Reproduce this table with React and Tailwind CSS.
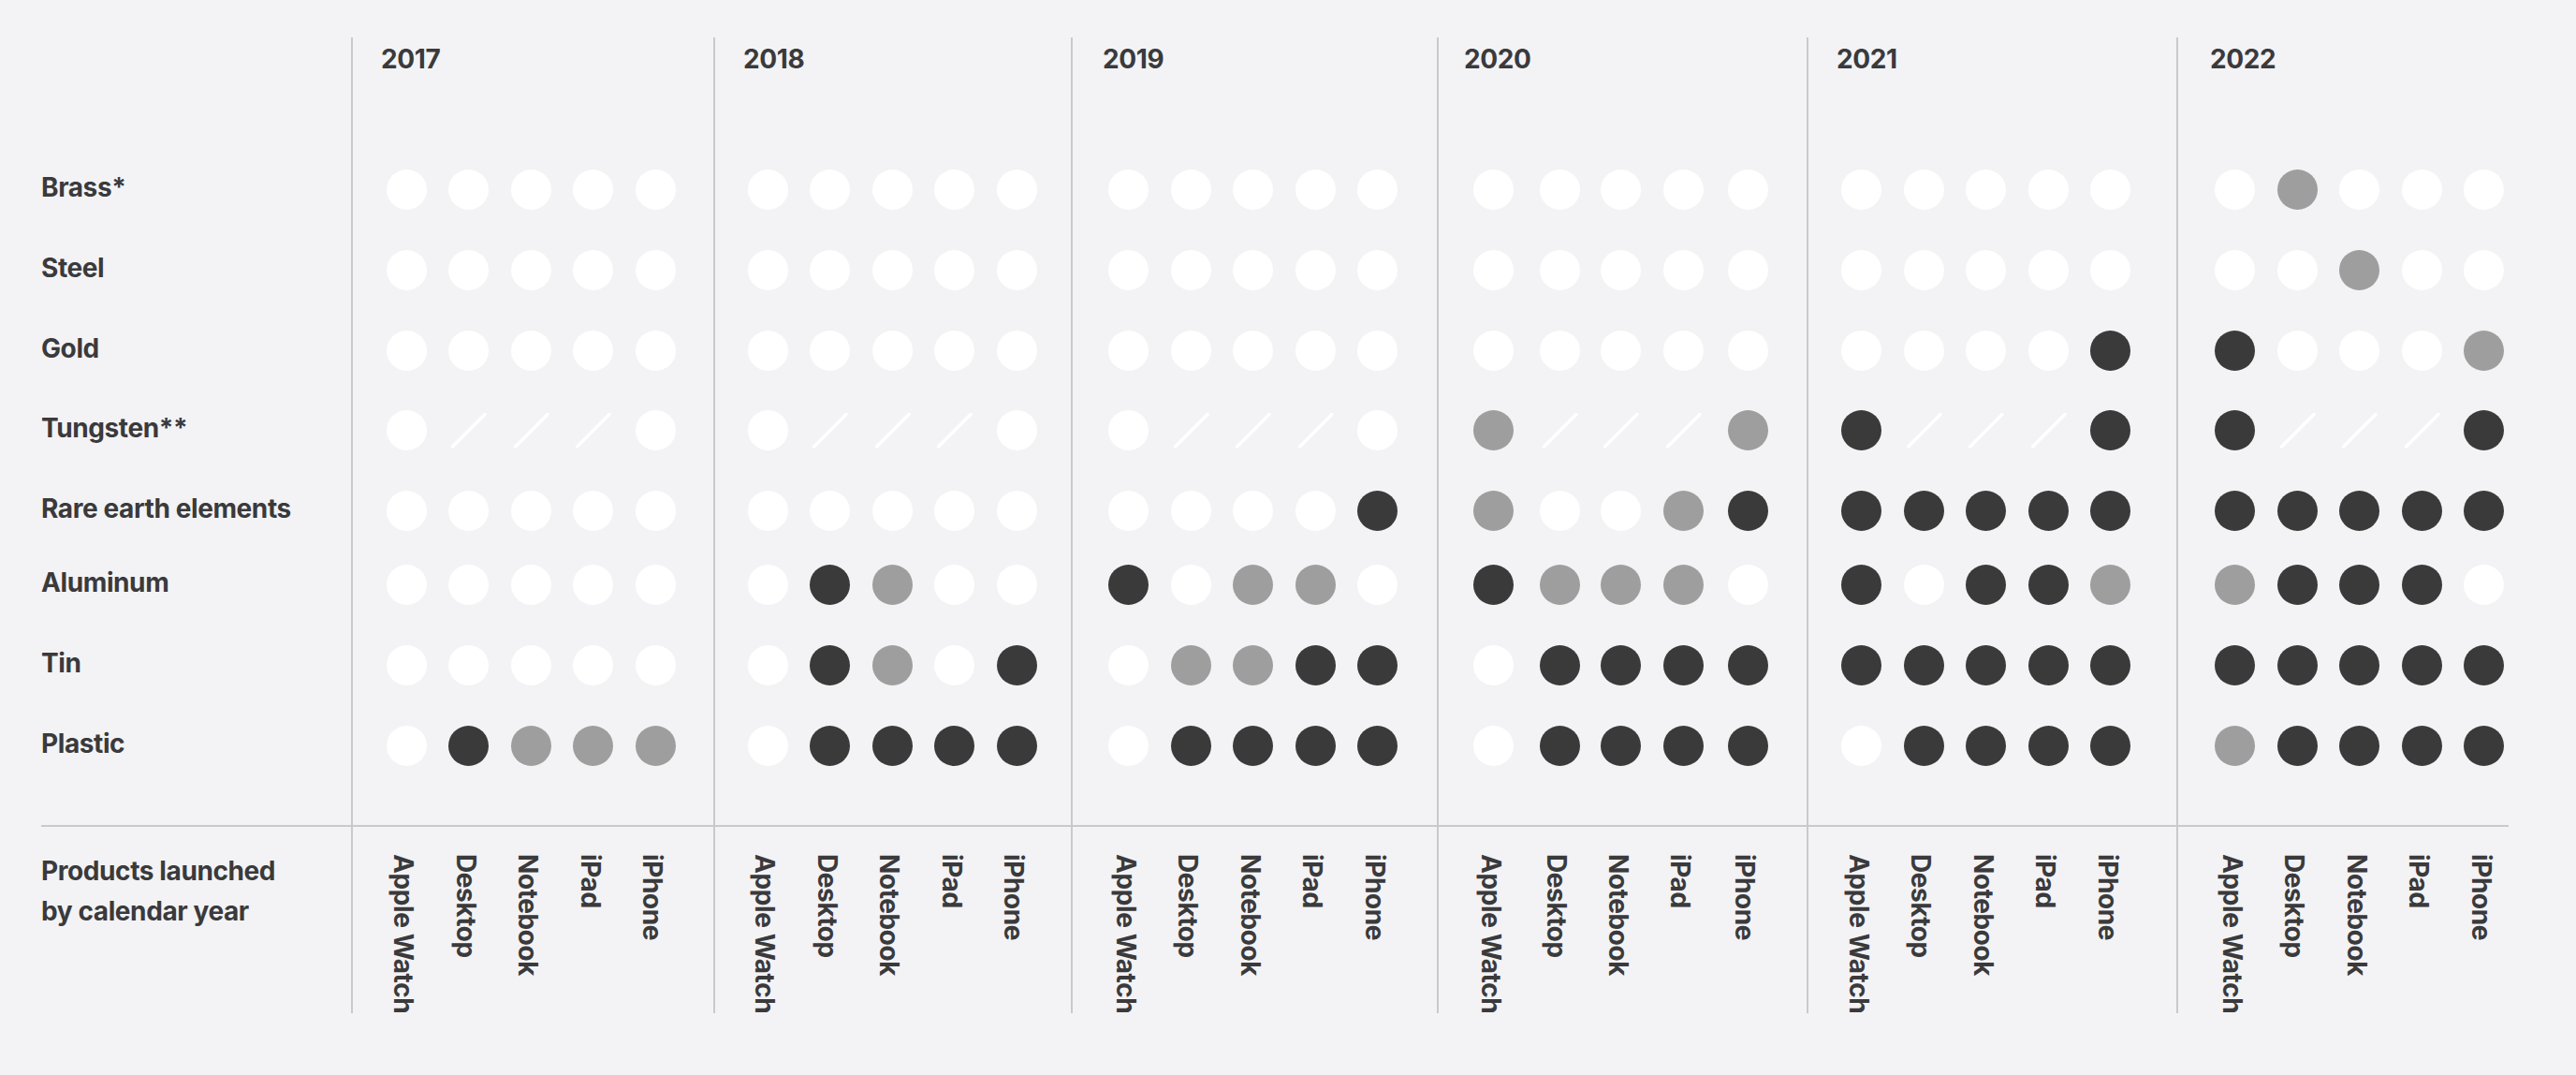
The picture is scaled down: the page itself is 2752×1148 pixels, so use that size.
import React from 'react';

const materials = [
    { label: 'Brass*', h: 'h-[86px]' },
    { label: 'Steel', h: 'h-[86px]' },
    { label: 'Gold', h: 'h-[85px]' },
    { label: 'Tungsten**', h: 'h-[86px]' },
    { label: 'Rare earth elements', h: 'h-[79px]' },
    { label: 'Aluminum', h: 'h-[86px]' },
    { label: 'Tin', h: 'h-[86px]' },
    { label: 'Plastic', h: 'h-[105.5px]' },
];

const products = ['Apple Watch', 'Desktop', 'Notebook', 'iPad', 'iPhone'];

// W = white, G = gray, D = dark, S = slash (not applicable)
const REGULAR = ['ml-[23.5px]', 'ml-[23.5px]', 'ml-[23.5px]', 'ml-[23.5px]'];

const years = [
    {
        year: '2017', col: 'w-[387px]', yearPl: 'pl-[30px]', dotPl: 'pl-[35.5px]', footPl: 'pl-[32.5px]', gaps: REGULAR,
        rows: ['WWWWW', 'WWWWW', 'WWWWW', 'WSSSW', 'WWWWW', 'WWWWW', 'WWWWW', 'WDGGG'],
    },
    {
        year: '2018', col: 'w-[382px]', yearPl: 'pl-[30px]', dotPl: 'pl-[34.5px]', footPl: 'pl-[31.5px]', gaps: REGULAR,
        rows: ['WWWWW', 'WWWWW', 'WWWWW', 'WSSSW', 'WWWWW', 'WDGWW', 'WDGWD', 'WDDDD'],
    },
    {
        year: '2019', col: 'w-[391px]', yearPl: 'pl-[32px]', dotPl: 'pl-[38px]', footPl: 'pl-[35px]', gaps: REGULAR,
        rows: ['WWWWW', 'WWWWW', 'WWWWW', 'WSSSW', 'WWWWD', 'DWGGW', 'WGGDD', 'WDDDD'],
    },
    {
        year: '2020', col: 'w-[395px]', yearPl: 'pl-[27px]', dotPl: 'pl-[37px]', footPl: 'pl-[34px]',
        gaps: ['ml-[27.7px]', 'ml-[22.6px]', 'ml-[23.7px]', 'ml-[25.7px]'],
        rows: ['WWWWW', 'WWWWW', 'WWWWW', 'GSSSG', 'GWWGD', 'DGGGW', 'WDDDD', 'WDDDD'],
    },
    {
        year: '2021', col: 'w-[395px]', yearPl: 'pl-[30px]', dotPl: 'pl-[35.3px]', footPl: 'pl-[32.3px]', gaps: REGULAR,
        rows: ['WWWWW', 'WWWWW', 'WWWWD', 'DSSSD', 'DDDDD', 'DWDDG', 'DDDDD', 'WDDDD'],
    },
    {
        year: '2022', col: 'w-[355px]', yearPl: 'pl-[34px]', dotPl: 'pl-[39.3px]', footPl: 'pl-[36.3px]', gaps: REGULAR,
        rows: ['WGWWW', 'WWGWW', 'DWWWG', 'DSSSD', 'DDDDD', 'GDDDW', 'DDDDD', 'GDDDD'],
    },
];

const dotColor = {
    W: 'bg-white',
    G: 'bg-[#9e9e9e]',
    D: 'bg-[#3a3a3a]',
};

const Dot = ({ v }) => {
    if (v === 'S') {
        return (
            <svg width="43" height="43" viewBox="0 0 43 43" className="shrink-0">
                <line x1="4.5" y1="39" x2="39" y2="4.5" stroke="#ffffff" strokeWidth="3.5" strokeLinecap="round" />
            </svg>
        );
    }
    return <div className={`w-[43px] h-[43px] shrink-0 rounded-full ${dotColor[v]}`} />;
};

const YearColumn = ({ data }) => (
    <div className={`${data.col} shrink-0 flex flex-col border-l-2 border-[#c9c9cd]`}>
        <div className={`h-[141.5px] pt-[9px] ${data.yearPl}`}>
            <span className="text-[28px] leading-[28px]">{data.year}</span>
        </div>

        {materials.map((m, r) => (
            <div key={m.label} className={m.h}>
                <div className={`flex items-center h-[43px] ${data.dotPl}`}>
                    {data.rows[r].split('').map((v, i) => (
                        <div key={i} className={i > 0 ? data.gaps[i - 1] : ''}>
                            <Dot v={v} />
                        </div>
                    ))}
                </div>
            </div>
        ))}

        <div className="h-[2px] bg-[#c9c9cd]" />

        {/* rotated product names */}
        <div className={`flex-1 flex pt-[29px] ${data.footPl}`}>
            {products.map((p, i) => (
                <div key={p} className={`w-[43px] shrink-0 flex justify-center ${i > 0 ? data.gaps[i - 1] : ''}`}>
                    <span className="[writing-mode:vertical-rl] text-[28px] leading-[28px] whitespace-nowrap">
                        {p}
                    </span>
                </div>
            ))}
        </div>
    </div>
);

export default function App() {
    return (
        <div className="w-[2752px] h-[1148px] bg-[#f3f3f5] text-[#3a3a3c] [font-family:Inter,'Noto_Sans',sans-serif] font-bold tracking-[-0.025em] pt-[40px] overflow-hidden">
            <div className="flex h-[1042px]">
                {/* material labels */}
                <div className="w-[375px] shrink-0 pl-[44px] flex flex-col">
                    <div className="h-[141.5px]" />
                    {materials.map((m) => (
                        <div key={m.label} className={m.h}>
                            <div className="h-[43px] flex items-center pb-[6px] text-[28px] whitespace-nowrap">
                                {m.label}
                            </div>
                        </div>
                    ))}
                    <div className="h-[2px] bg-[#c9c9cd]" />
                    <div className="pt-[26px] text-[28px] leading-[43px]">
                        <div>Products launched</div>
                        <div>by calendar year</div>
                    </div>
                </div>

                {years.map((y) => (
                    <YearColumn key={y.year} data={y} />
                ))}
            </div>
        </div>
    );
}
